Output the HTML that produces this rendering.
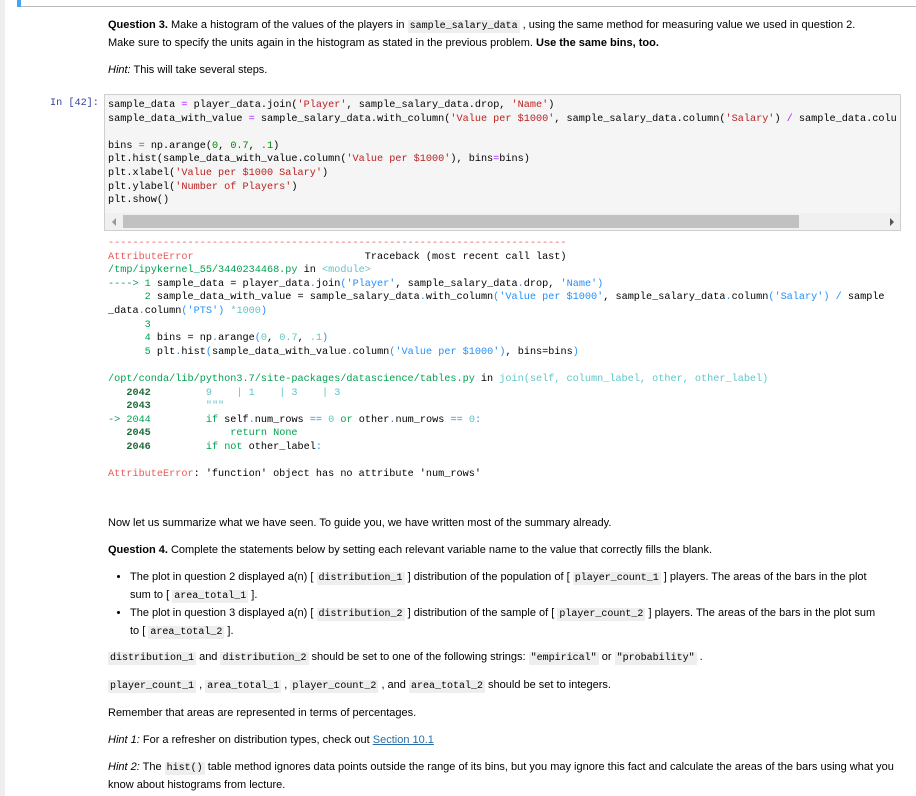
<!DOCTYPE html>
<html><head><style>
body{margin:0;background:#fff;width:916px;height:796px;overflow:hidden;position:relative;font-family:"Liberation Sans",Arial,sans-serif;font-size:11px;color:#000}
.abs{position:absolute}
.md{left:108px;width:790px;line-height:17px}
code,.mono{font-family:"Liberation Mono",monospace}
.md code{background:#eee;padding:1px 2px;font-size:10px}
pre{margin:0;font-family:"Liberation Mono",monospace;font-size:10.2px;line-height:13.6px;white-space:pre}
.s{color:#ba2121}.n{color:#080}.o{color:#aa22ff}
.r{color:#e75c58}.g{color:#00a250}.c{color:#60c6c8}.b{color:#208ffb}.bg{color:#1f6b3a;font-weight:bold}
</style></head><body>
<div class="abs" style="left:0;top:0;width:5px;height:796px;background:#eee"></div>
<div class="abs" style="left:17px;top:0;width:899px;height:6px;border-bottom:1px solid #bbb"></div>
<div class="abs" style="left:17px;top:0;width:4px;height:7px;background:#42a5f5"></div>

<div class="abs md" style="top:17px">
<b>Question 3.</b> Make a histogram of the values of the players in <code>sample_salary_data</code> , using the same method for measuring value we used in question 2.<br>Make sure to specify the units again in the histogram as stated in the previous problem. <b>Use the same bins, too.</b>
</div>
<div class="abs md" style="top:62px"><i>Hint:</i> This will take several steps.</div>

<div class="abs mono" style="left:50px;top:98px;font-size:10.2px;color:#303f9f">In [42]:</div>
<div class="abs" style="left:104px;top:94px;width:795px;height:135px;border:1px solid #cfcfcf;background:#f5f5f5;overflow:hidden">
<pre style="position:absolute;left:3px;top:4px">sample_data <span class="o">=</span> player_data.join(<span class="s">'Player'</span>, sample_salary_data.drop, <span class="s">'Name'</span>)
sample_data_with_value <span class="o">=</span> sample_salary_data.with_column(<span class="s">'Value per $1000'</span>, sample_salary_data.column(<span class="s">'Salary'</span>) <span class="o">/</span> sample_data.colu

bins <span class="o">=</span> np.arange(<span class="n">0</span>, <span class="n">0.7</span>, <span class="n">.1</span>)
plt.hist(sample_data_with_value.column(<span class="s">'Value per $1000'</span>), bins<span class="o">=</span>bins)
plt.xlabel(<span class="s">'Value per $1000 Salary'</span>)
plt.ylabel(<span class="s">'Number of Players'</span>)
plt.show()</pre>
<div class="abs" style="left:0;top:118px;width:795px;height:17px;background:#f0f0f0"></div>
<div class="abs" style="left:18px;top:120px;width:676px;height:13px;background:#c1c1c1"></div>
<div class="abs" style="left:7px;top:123px;width:0;height:0;border-top:4px solid transparent;border-bottom:4px solid transparent;border-right:4px solid #999"></div>
<div class="abs" style="left:785px;top:123px;width:0;height:0;border-top:4px solid transparent;border-bottom:4px solid transparent;border-left:4px solid #555"></div>
</div>

<pre class="abs" style="left:108px;top:237px"><span class="r">---------------------------------------------------------------------------</span>
<span class="r">AttributeError</span>                            Traceback (most recent call last)
<span class="g">/tmp/ipykernel_55/3440234468.py</span> in <span class="c">&lt;module&gt;</span>
<span class="g">----&gt; 1</span> sample_data = player_data<span class="b">.</span>join<span class="b">(</span><span class="b">'Player'</span>, sample_salary_data<span class="b">.</span>drop, <span class="b">'Name'</span><span class="b">)</span>
<span class="g">      2</span> sample_data_with_value = sample_salary_data<span class="b">.</span>with_column<span class="b">(</span><span class="b">'Value per $1000'</span>, sample_salary_data<span class="b">.</span>column<span class="b">(</span><span class="b">'Salary'</span><span class="b">)</span> <span class="b">/</span> sample
_data<span class="b">.</span>column<span class="b">(</span><span class="b">'PTS'</span><span class="b">)</span> <span class="c">*1000</span><span class="b">)</span>
<span class="g">      3</span>
<span class="g">      4</span> bins = np<span class="b">.</span>arange<span class="b">(</span><span class="c">0</span>, <span class="c">0.7</span>, <span class="c">.1</span><span class="b">)</span>
<span class="g">      5</span> plt<span class="b">.</span>hist<span class="b">(</span>sample_data_with_value<span class="b">.</span>column<span class="b">(</span><span class="b">'Value per $1000'</span><span class="b">)</span>, bins=bins<span class="b">)</span>

<span class="g">/opt/conda/lib/python3.7/site-packages/datascience/tables.py</span> in <span class="c">join(self, column_label, other, other_label)</span>
<span class="bg">   2042</span>         <span class="c">9    | 1    | 3    | 3</span>
<span class="bg">   2043</span>         <span class="c">"""</span>
<span class="g">-&gt; 2044</span>         <span class="g">if</span> self<span class="b">.</span>num_rows <span class="b">==</span> <span class="c">0</span> <span class="g">or</span> other<span class="b">.</span>num_rows <span class="b">==</span> <span class="c">0</span><span class="b">:</span>
<span class="bg">   2045</span>             <span class="g">return</span> <span class="g">None</span>
<span class="bg">   2046</span>         <span class="g">if</span> <span class="g">not</span> other_label<span class="b">:</span>

<span class="r">AttributeError</span>: 'function' object has no attribute 'num_rows'</pre>

<div class="abs md" style="top:515px">Now let us summarize what we have seen. To guide you, we have written most of the summary already.</div>
<div class="abs md" style="top:542px"><b>Question 4.</b> Complete the statements below by setting each relevant variable name to the value that correctly fills the blank.</div>
<ul class="abs md" style="top:569px;margin:0;padding-left:22px;width:748px">
<li>The plot in question 2 displayed a(n) [ <code>distribution_1</code> ] distribution of the population of [ <code>player_count_1</code> ] players. The areas of the bars in the plot sum to [ <code>area_total_1</code> ].</li>
<li>The plot in question 3 displayed a(n) [ <code>distribution_2</code> ] distribution of the sample of [ <code>player_count_2</code> ] players. The areas of the bars in the plot sum to [ <code>area_total_2</code> ].</li>
</ul>
<div class="abs md" style="top:649px"><code>distribution_1</code> and <code>distribution_2</code> should be set to one of the following strings: <code>"empirical"</code> or <code>"probability"</code> .</div>
<div class="abs md" style="top:677px"><code>player_count_1</code> , <code>area_total_1</code> , <code>player_count_2</code> , and <code>area_total_2</code> should be set to integers.</div>
<div class="abs md" style="top:705px">Remember that areas are represented in terms of percentages.</div>
<div class="abs md" style="top:732px"><i>Hint 1:</i> For a refresher on distribution types, check out <span style="color:#296eaa;text-decoration:underline">Section 10.1</span></div>
<div class="abs md" style="top:759px"><i>Hint 2:</i> The <code>hist()</code> table method ignores data points outside the range of its bins, but you may ignore this fact and calculate the areas of the bars using what you know about histograms from lecture.</div>
</body></html>
